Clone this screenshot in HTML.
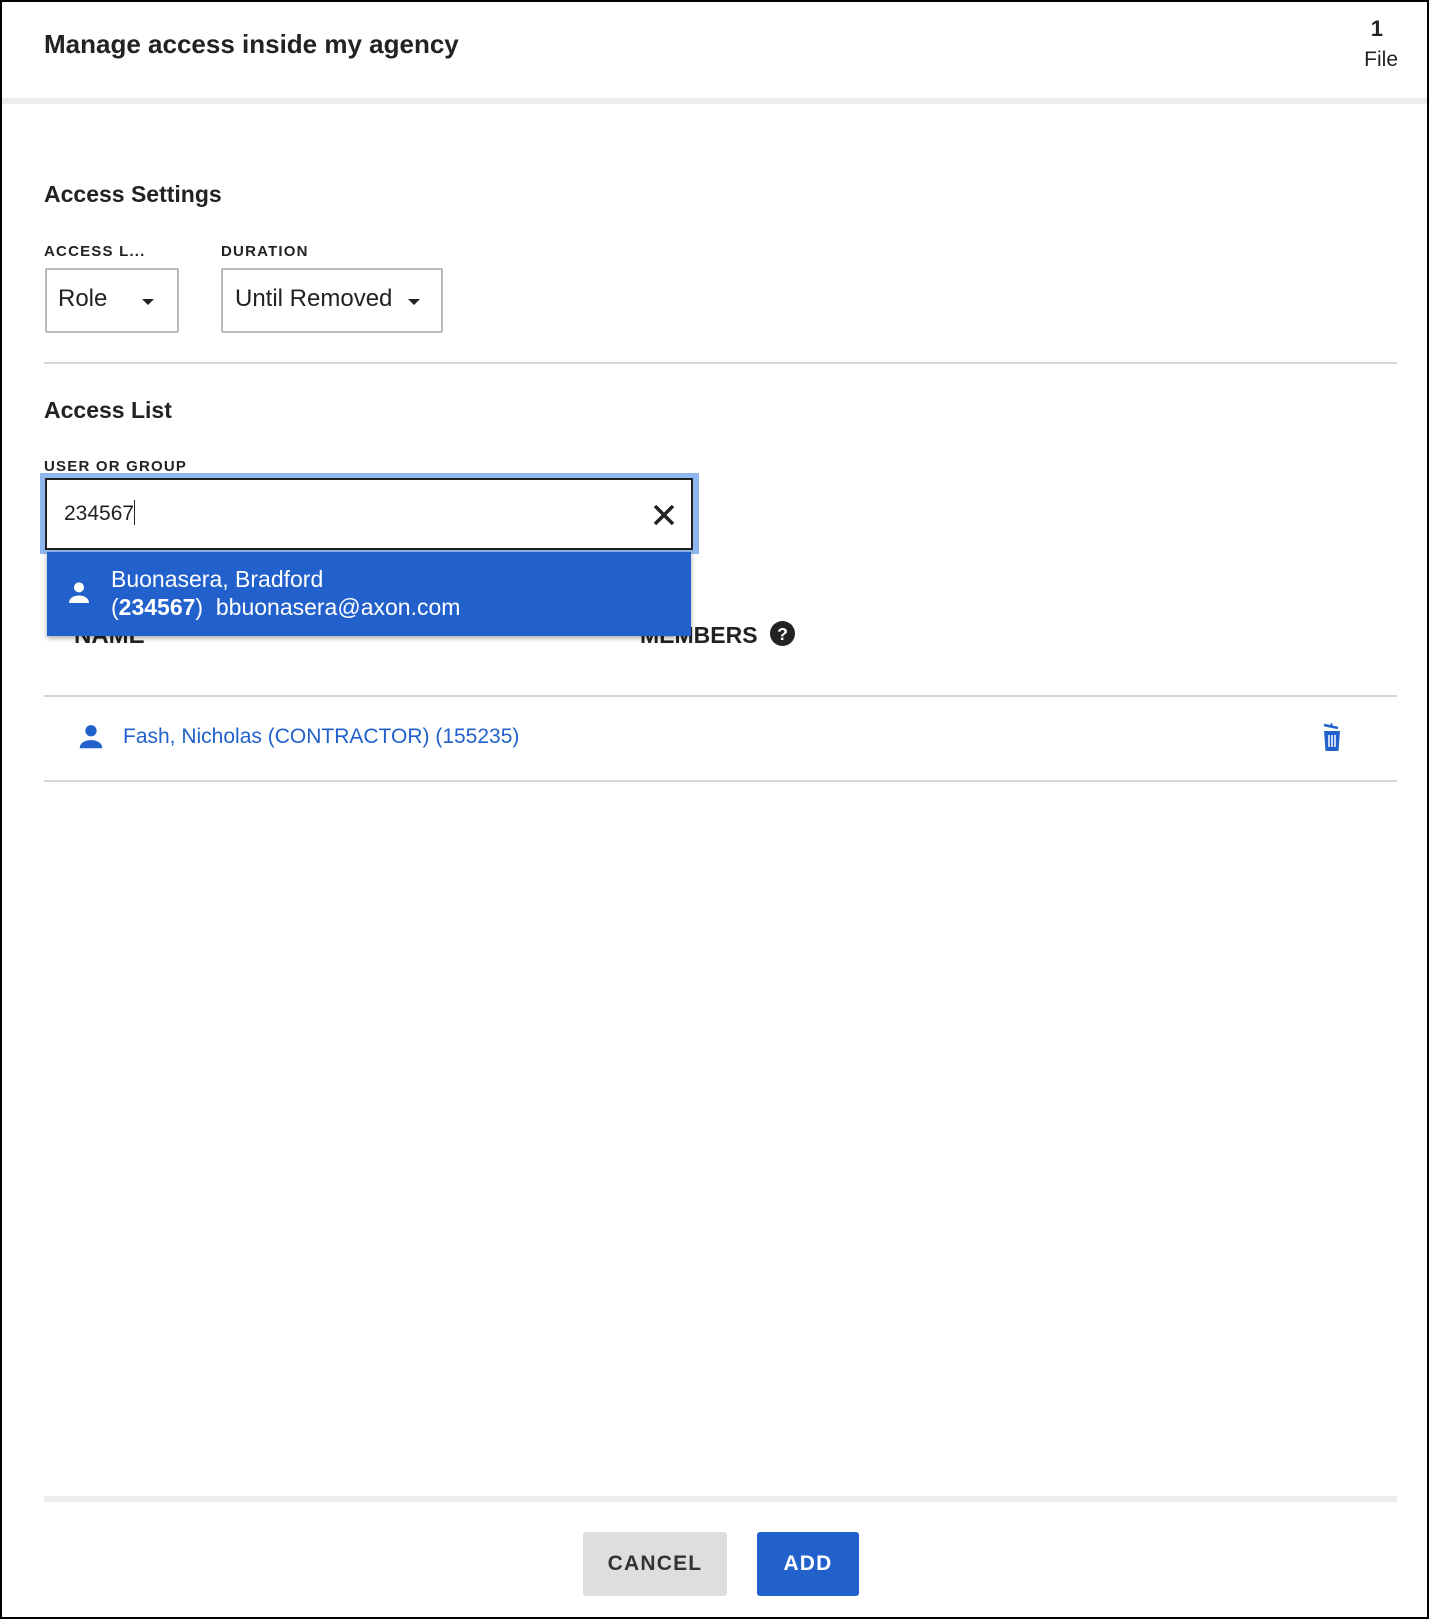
<!DOCTYPE html>
<html><head><meta charset="utf-8"><style>
*{margin:0;padding:0;box-sizing:border-box}
body{width:1429px;height:1619px;background:#fff;font-family:"Liberation Sans",sans-serif;color:#222;position:relative;overflow:hidden}
.a{position:absolute;white-space:nowrap}
.frame{position:absolute;left:0;top:0;width:1429px;height:1619px;border:2px solid #000;pointer-events:none;z-index:10}
.lbl{font-size:15px;letter-spacing:1.2px;color:#222;font-weight:bold}
.sel{position:absolute;border:2px solid #bbb;border-radius:2px;background:#fff}
.caret{position:absolute;width:0;height:0;border-left:6px solid transparent;border-right:6px solid transparent;border-top:6px solid #222}
.line{position:absolute;left:44px;width:1353px;height:2px;background:#d6d6d6}
</style></head><body>
<div class="frame"></div>
<div class="a" style="left:44px;top:29px;font-size:26px;font-weight:bold;color:#222">Manage access inside my agency</div>
<div class="a" style="right:46px;top:16px;font-size:22px;font-weight:bold;text-align:right">1</div>
<div class="a" style="right:31px;top:48px;font-size:21px;">File</div>
<div class="a" style="left:2px;top:98px;width:1425px;height:6px;background:#ececec"></div>

<div class="a" style="left:44px;top:181px;font-size:23px;font-weight:bold">Access Settings</div>
<div class="a lbl" style="left:44px;top:243px">ACCESS L...</div>
<div class="a lbl" style="left:221px;top:243px">DURATION</div>
<div class="sel" style="left:45px;top:268px;width:134px;height:65px"></div>
<div class="a" style="left:58px;top:285px;font-size:24px">Role</div>
<div class="caret" style="left:142px;top:299px"></div>
<div class="sel" style="left:221px;top:268px;width:222px;height:65px"></div>
<div class="a" style="left:235px;top:285px;font-size:24px">Until Removed</div>
<div class="caret" style="left:408px;top:299px"></div>
<div class="line" style="top:362px"></div>

<div class="a" style="left:44px;top:397px;font-size:23px;font-weight:bold">Access List</div>
<div class="a lbl" style="left:44px;top:458px">USER OR GROUP</div>
<div class="a" style="left:40px;top:473px;width:659px;height:81px;background:#8fb6ee"></div>
<div class="a" style="left:45px;top:478px;width:648px;height:72px;background:#fff;border:2px solid #222"></div>
<div class="a" style="left:64px;top:500px;font-size:21px;color:#222">234567<span style="display:inline-block;width:1px;height:25px;background:#222;vertical-align:-5px"></span></div>
<svg class="a" style="left:652px;top:503px" width="24" height="24" viewBox="0 0 24 24"><path d="M3 3L21 21M21 3L3 21" stroke="#222" stroke-width="3.5"/></svg>

<div class="a" style="left:74px;top:622px;font-size:24px;font-weight:bold;color:#222">NAME</div>
<div class="a" style="left:640px;top:622px;font-size:23px;font-weight:bold;color:#222">MEMBERS</div>
<svg class="a" style="left:770px;top:621px" width="25" height="25" viewBox="0 0 24 24"><circle cx="12" cy="12" r="12" fill="#222"/><text x="12" y="18" font-family="Liberation Sans" font-weight="bold" font-size="17" fill="#fff" text-anchor="middle">?</text></svg>

<div class="a" style="left:47px;top:552px;width:644px;height:84px;background:#2261cc;box-shadow:0 2px 5px rgba(0,0,0,.35)"></div>
<svg class="a" style="left:64px;top:578px" width="30" height="30" viewBox="0 0 24 24"><circle cx="12" cy="7.5" r="4" fill="#fff"/><path d="M4 20c0-4 4-6 8-6s8 2 8 6z" fill="#fff"/></svg>
<div class="a" style="left:111px;top:566px;font-size:23px;color:#fff">Buonasera, Bradford</div>
<div class="a" style="left:111px;top:594px;font-size:23px;color:#fff">(<b>234567</b>)&nbsp; bbuonasera@axon.com</div>

<div class="line" style="top:695px"></div>
<svg class="a" style="left:76px;top:722px" width="30" height="30" viewBox="0 0 24 24"><circle cx="12" cy="7" r="4.5" fill="#2261cc"/><path d="M3 21c0-4.5 4.5-6.5 9-6.5s9 2 9 6.5z" fill="#2261cc"/></svg>
<div class="a" style="left:123px;top:725px;font-size:21px;color:#2261cc">Fash, Nicholas (CONTRACTOR) (155235)</div>
<svg class="a" style="left:1322px;top:722px" width="20" height="32" viewBox="0 0 20 32"><path d="M2 3L16 6" stroke="#2261cc" stroke-width="2.5"/><path d="M9 3.5l1 -2" stroke="#2261cc" stroke-width="2"/><path d="M2 9h16l-1.5 20h-13z" fill="#2261cc"/><path d="M7 13v12M10 13v12M13 13v12" stroke="#fff" stroke-width="1.5"/></svg>
<div class="line" style="top:780px"></div>

<div class="a" style="left:44px;top:1496px;width:1353px;height:6px;background:#ececec"></div>
<div class="a" style="left:583px;top:1532px;width:144px;height:64px;background:#dedede;border-radius:3px;font-size:21px;font-weight:bold;letter-spacing:1.2px;color:#333;text-align:center;line-height:64px">CANCEL</div>
<div class="a" style="left:757px;top:1532px;width:102px;height:64px;background:#2261cc;border-radius:3px;font-size:21px;font-weight:bold;letter-spacing:1.2px;color:#fff;text-align:center;line-height:64px">ADD</div>
</body></html>
